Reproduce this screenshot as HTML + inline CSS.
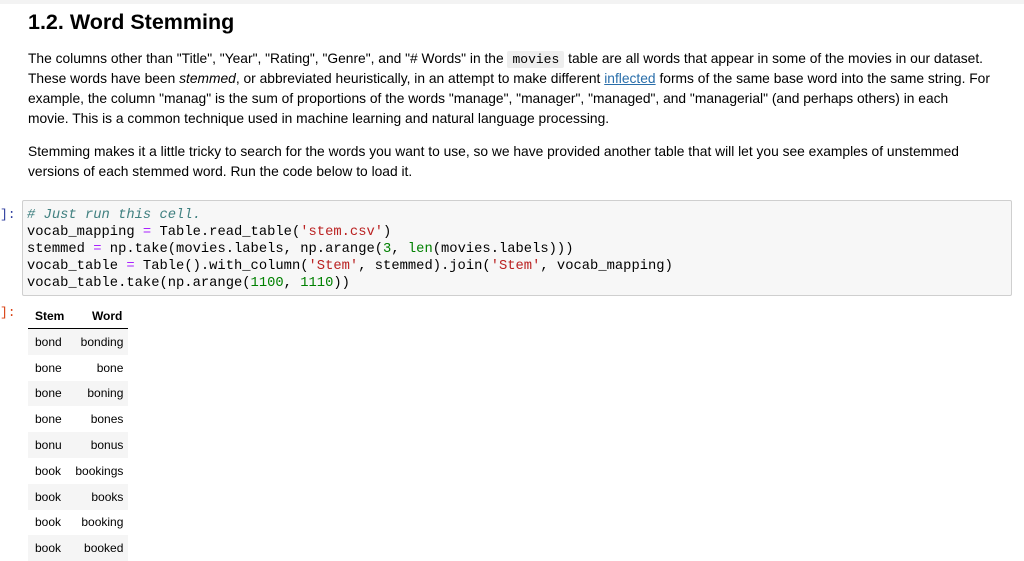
<!DOCTYPE html>
<html><head><meta charset="utf-8"><style>
body{margin:0;width:1024px;height:553px;background:#fff;overflow:hidden;position:relative;font-family:"Liberation Sans",Arial,sans-serif;color:#000}
.t{position:absolute;white-space:nowrap;font-size:13.8px;left:28px}
h1{position:absolute;left:28px;top:10px;margin:0;font-size:21.5px;font-weight:bold}
code.i{font-family:"Liberation Mono",monospace;background:#eee;padding:1px 5px;border-radius:2px;font-size:13px}
a{color:#296eaa;text-decoration:underline}
.pr{position:absolute;left:0;font-family:"Liberation Mono",monospace;font-size:13px}
.code{position:absolute;left:22px;top:200px;width:988px;height:94px;background:#f7f7f7;border:1px solid #cfcfcf;border-radius:2px}
.cl{position:absolute;left:4px;white-space:pre;font-family:"Liberation Mono",monospace;font-size:13.8px}
.cm{color:#408080;font-style:italic}.op{color:#aa22ff}.s{color:#ba2121}.n{color:#008000}
table{position:absolute;left:28px;top:303px;border-collapse:collapse;font-size:12px;width:100px}
th{font-weight:bold;height:25px;border-bottom:1px solid #000;padding:0 6px;text-align:right}
th:first-child,td:first-child{text-align:left;padding-left:7px}
td{height:25.8px;padding:0 5px;text-align:right}
tr:nth-child(even) td{background:#f5f5f5}
</style></head><body>
<div style="position:absolute;left:0;top:0;width:1024px;height:4px;background:#f3f3f3"></div>
<h1>1.2. Word Stemming</h1>
<div class="t" style="top:51px">The columns other than "Title", "Year", "Rating", "Genre", and "# Words" in the <code class="i">movies</code> table are all words that appear in some of the movies in our dataset.</div>
<div class="t" style="top:71px">These words have been <i>stemmed</i>, or abbreviated heuristically, in an attempt to make different <a>inflected</a> forms of the same base word into the same string. For</div>
<div class="t" style="top:91px">example, the column "manag" is the sum of proportions of the words "manage", "manager", "managed", and "managerial" (and perhaps others) in each</div>
<div class="t" style="top:111px">movie. This is a common technique used in machine learning and natural language processing.</div>
<div class="t" style="top:144px">Stemming makes it a little tricky to search for the words you want to use, so we have provided another table that will let you see examples of unstemmed</div>
<div class="t" style="top:164px">versions of each stemmed word. Run the code below to load it.</div>
<div class="pr" style="top:207px;color:#303f9f">]:</div>
<div class="code">
<div class="cl" style="top:7px"><span class="cm"># Just run this cell.</span></div>
<div class="cl" style="top:24px">vocab_mapping <span class="op">=</span> Table.read_table(<span class="s">'stem.csv'</span>)</div>
<div class="cl" style="top:41px">stemmed <span class="op">=</span> np.take(movies.labels, np.arange(<span class="n">3</span>, <span class="n">len</span>(movies.labels)))</div>
<div class="cl" style="top:58px">vocab_table <span class="op">=</span> Table().with_column(<span class="s">'Stem'</span>, stemmed).join(<span class="s">'Stem'</span>, vocab_mapping)</div>
<div class="cl" style="top:75px">vocab_table.take(np.arange(<span class="n">1100</span>, <span class="n">1110</span>))</div>
</div>
<div class="pr" style="top:305px;color:#d84315">]:</div>
<table>
<tr><th>Stem</th><th>Word</th></tr>
<tr><td>bond</td><td>bonding</td></tr>
<tr><td>bone</td><td>bone</td></tr>
<tr><td>bone</td><td>boning</td></tr>
<tr><td>bone</td><td>bones</td></tr>
<tr><td>bonu</td><td>bonus</td></tr>
<tr><td>book</td><td>bookings</td></tr>
<tr><td>book</td><td>books</td></tr>
<tr><td>book</td><td>booking</td></tr>
<tr><td>book</td><td>booked</td></tr>
</table>
</body></html>
